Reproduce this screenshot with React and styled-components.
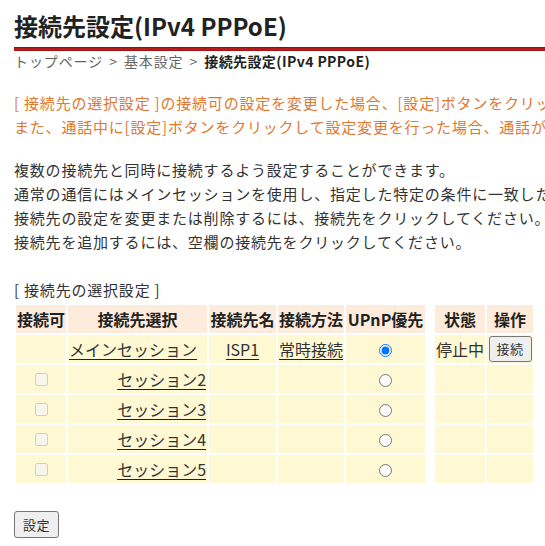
import React from 'react'
import styled, { createGlobalStyle } from 'styled-components'

const GlobalStyle = createGlobalStyle`
    * { box-sizing: border-box; }
    html, body {
        margin: 0;
        padding: 0;
        background: #fff;
        overflow: hidden;
    }
    body {
        font-family: "Noto Sans CJK JP", "Noto Sans", sans-serif;
        color: #333;
    }
`

const Page = styled.div`
    padding: 0 0 0 14px;
    width: 545px;
    overflow: hidden;
`

const Title = styled.h1`
    margin: 10px 0 0 0;
    font-size: 24px;
    line-height: 32px;
    font-weight: 700;
    color: #222;
    white-space: nowrap;
`

const RedRule = styled.div`
    margin-top: 5px;
    height: 4px;
    width: 100%;
    background: linear-gradient(to bottom, #7e0d0d 0%, #c81f1f 50%, #961212 100%);
`

const Crumbs = styled.div`
    font-size: 14px;
    line-height: 20px;
    color: #666;
    letter-spacing: 0.9px;
    white-space: nowrap;
`

const Sep = styled.span`
    margin: 0 2px;
`

const Current = styled.span`
    color: #222;
    font-weight: 700;
    letter-spacing: 0.4px;
`

const Para = styled.p`
    margin: ${p => p.$top}px 0 0 0;
    font-size: 15px;
    line-height: 24px;
    letter-spacing: 0.8px;
    color: ${p => p.$warn ? '#e2772f' : '#333'};
    white-space: nowrap;
`

const Caption = styled.div`
    margin-top: 26px;
    font-size: 15px;
    line-height: 20px;
    letter-spacing: 0.8px;
    color: #333;
`

const Tables = styled.div`
    display: flex;
    gap: 6px;
    align-items: flex-start;
    margin-top: 3px;
`

const Table = styled.table`
    border-collapse: separate;
    border-spacing: 2px;
    margin: 0;
    table-layout: fixed;
    font-size: 16px;
`

const Th = styled.th`
    width: ${p => p.$w}px;
    height: 28px;
    padding: 0 1px;
    background: #fdecdb;
    font-weight: 700;
    color: #222;
    text-align: center;
    white-space: nowrap;
    line-height: 20px;
`

const Td = styled.td`
    height: 28px;
    padding: 0 1px;
    background: #fef8d3;
    text-align: ${p => p.$align || 'center'};
    white-space: nowrap;
    line-height: 20px;
    vertical-align: middle;
    color: #333;
`

const Link = styled.a`
    color: #333;
    text-decoration: underline;
    text-decoration-color: #1c1c4a;
    text-underline-offset: 3px;
    cursor: pointer;
`

const Box = styled.input`
    margin: 3px 0 0 0;
    width: 13px;
    height: 13px;
`

const Radio = styled.input`
    margin: 5px 0 0 0;
    width: 13px;
    height: 13px;
`

const SmallButton = styled.button`
    font-family: "Noto Sans CJK JP", sans-serif;
    font-size: 13px;
    height: 26px;
    padding: 0 7px;
    margin: 0;
    color: #333;
    background: #efefef;
    border: 1px solid #767676;
    border-radius: 3px;
    line-height: 22px;
    letter-spacing: 0.5px;
`

const Submit = styled(SmallButton)`
    margin-top: 26px;
    height: 27px;
    padding: 0 8px;
`

const sessions = [
  { name: 'メインセッション', main: true, isp: 'ISP1', method: '常時接続', upnp: true, state: '停止中' },
  { name: 'セッション2' },
  { name: 'セッション3' },
  { name: 'セッション4' },
  { name: 'セッション5' },
]

const App = () => {
  return (
    <Page>
      <GlobalStyle />
      <Title>接続先設定(IPv4 PPPoE)</Title>
      <RedRule />
      <Crumbs>
        トップページ<Sep> &gt; </Sep>基本設定<Sep> &gt; </Sep><Current>接続先設定(IPv4 PPPoE)</Current>
      </Crumbs>
      <Para $warn $top={20}>
        [ 接続先の選択設定 ]の接続可の設定を変更した場合、[設定]ボタンをクリックしてください。<br />
        また、通話中に[設定]ボタンをクリックして設定変更を行った場合、通話が切断されます。
      </Para>
      <Para $top={19}>
        複数の接続先と同時に接続するよう設定することができます。<br />
        通常の通信にはメインセッションを使用し、指定した特定の条件に一致した通信には他の接続先を使用します。<br />
        接続先の設定を変更または削除するには、接続先をクリックしてください。<br />
        接続先を追加するには、空欄の接続先をクリックしてください。
      </Para>
      <Caption>[ 接続先の選択設定 ]</Caption>
      <Tables>
        <Table>
          <thead>
            <tr>
              <Th $w={50}>接続可</Th>
              <Th $w={139}>接続先選択</Th>
              <Th $w={67}>接続先名</Th>
              <Th $w={66}>接続方法</Th>
              <Th $w={79}>UPnP優先</Th>
            </tr>
          </thead>
          <tbody>
            {sessions.map(s => (
              <tr key={s.name}>
                <Td>{!s.main && <Box type="checkbox" disabled />}</Td>
                <Td $align={s.main ? 'left' : 'right'}>
                  <Link>{s.name}</Link>
                </Td>
                <Td>{s.isp && <Link>{s.isp}</Link>}</Td>
                <Td>{s.method && <Link>{s.method}</Link>}</Td>
                <Td>
                  <Radio type="radio" name="upnp" defaultChecked={!!s.upnp} />
                </Td>
              </tr>
            ))}
          </tbody>
        </Table>
        <Table>
          <thead>
            <tr>
              <Th $w={50}>状態</Th>
              <Th $w={46}>操作</Th>
            </tr>
          </thead>
          <tbody>
            {sessions.map(s => (
              <tr key={s.name}>
                <Td>{s.state}</Td>
                <Td>{s.main && <SmallButton>接続</SmallButton>}</Td>
              </tr>
            ))}
          </tbody>
        </Table>
      </Tables>
      <Submit>設定</Submit>
    </Page>
  )
}

export default App
